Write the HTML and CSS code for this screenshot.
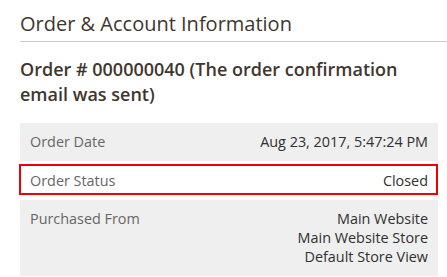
FILE: index.html
```html
<!DOCTYPE html>
<html>
<head>
<meta charset="utf-8">
<link rel="stylesheet" href="styles.css">
</head>
<body>
<section class="section">
  <h1 class="section-title">Order &amp; Account Information</h1>
  <h2 class="order-title">Order # 000000040 (The order confirmation email was sent)</h2>
  <div class="info-table">
    <div class="row odd">
      <div class="label">Order Date</div>
      <div class="value">Aug 23, 2017, 5:47:24 PM</div>
    </div>
    <div class="row even highlighted">
      <div class="label">Order Status</div>
      <div class="value">Closed</div>
      <span class="highlight-box"></span>
    </div>
    <div class="row odd">
      <div class="label">Purchased From</div>
      <div class="value">Main Website<br>Main Website Store<br>Default Store View</div>
    </div>
  </div>
</section>
</body>
</html>
```
FILE: styles.css
```css
html, body {
  margin: 0;
  padding: 0;
  background: #ffffff;
}
body {
  font-family: "Open Sans", "Liberation Sans", sans-serif;
  color: #303030;
  overflow: hidden;
}
.section {
  padding-left: 20px;
}
.section-title {
  margin: 0;
  padding: 12px 0 5px;
  font-size: 20px;
  line-height: 24px;
  font-weight: 400;
  color: #41362f;
  border-bottom: 1px solid #cccccc;
}
.order-title {
  margin: 15px 9px 0 0;
  font-size: 18px;
  line-height: 25px;
  font-weight: 600;
  color: #41362f;
}
.info-table {
  margin-top: 16px;
  width: 418px;
  display: flex;
  flex-direction: column;
}
.row {
  position: relative;
  display: flex;
  justify-content: space-between;
  padding: 9px 10px 10px;
  font-size: 14.4px;
  line-height: 19px;
}
.row.odd {
  background: #efefef;
}
.row.even {
  background: #ffffff;
  padding: 10px 10px;
}
.label {
  color: #666666;
}
.value {
  text-align: right;
  color: #303030;
}
.highlight-box {
  position: absolute;
  left: -1px;
  right: 0;
  top: 3px;
  bottom: 5px;
  border: 2px solid #f00000;
  pointer-events: none;
}
```
